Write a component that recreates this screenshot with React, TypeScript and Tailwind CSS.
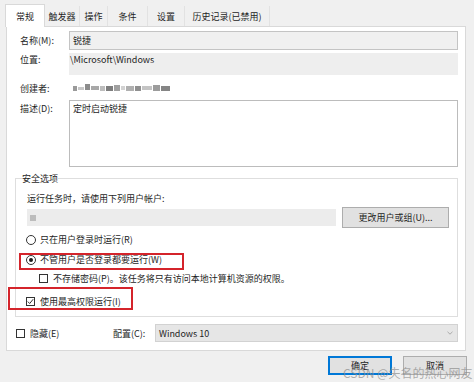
import React from "react"

function Radio({ checked }: { checked?: boolean }) {
  return (
    <span className="w-[10px] h-[10px] rounded-full border border-[#333] bg-white flex items-center justify-center shrink-0">
      {checked && <span className="w-[4px] h-[4px] rounded-full bg-[#1a1a1a]" />}
    </span>
  )
}

function Checkbox({ checked }: { checked?: boolean }) {
  return (
    <span className="w-[9px] h-[9px] border border-[#333] bg-white flex items-center justify-center shrink-0">
      {checked && (
        <svg width="7" height="7" viewBox="0 0 7 7">
          <path d="M0.8 3.6 L2.7 5.5 L6.2 1.2" fill="none" stroke="#1a1a1a" strokeWidth="0.9" />
        </svg>
      )}
    </span>
  )
}

const tabs = [
  { name: "触发器", w: "w-[35px]" },
  { name: "操作", w: "w-[28px]" },
  { name: "条件", w: "w-[40px]" },
  { name: "设置", w: "w-[37px]" },
  { name: "历史记录(已禁用)", w: "w-[85px]" },
]

export default function App() {
  return (
    <div className="relative w-[474px] h-[382px] overflow-hidden bg-[#f0f0f0] text-[9px] leading-[13px] text-[#1e1e1e] font-['Noto_Sans_CJK_SC',sans-serif]">
      {/* Tabs */}
      <div className="flex items-end h-[26px] pl-[5px]">
        <div className="relative z-10 -mb-px w-[40px] h-[23px] bg-white border border-b-0 border-[#d9d9d9] flex items-center justify-center">
          常规
        </div>
        {tabs.map((t) => (
          <div
            key={t.name}
            className={`${t.w} h-[20px] border-r border-[#e2e2e2] flex items-center justify-center`}
          >
            {t.name}
          </div>
        ))}
      </div>

      {/* Panel */}
      <div className="ml-[6px] w-[460px] bg-white border border-[#d9d9d9] pt-[4px] pb-[8px] pl-[8px] pr-[7px]">
        <div className="flex items-center h-[19px]">
          <div className="w-[54px] pl-[5px]">名称(M):</div>
          <div className="flex-1 h-[19px] bg-[#f0f0f0] border border-[#c4c4c4] px-[3px] flex items-center">锐捷</div>
        </div>

        <div className="mt-[3px] flex items-start">
          <div className="w-[54px] pl-[5px]">位置:</div>
          <div className="flex-1 h-[22px] bg-[#eeeeee] pl-[1px]">\Microsoft\Windows</div>
        </div>

        <div className="mt-[3px] h-[20px] flex items-center">
          <div className="w-[54px] pl-[5px]">创建者:</div>
          <div className="pl-[4px] flex items-center gap-[1px] blur-[0.6px]">
            <span className="w-[4px] h-[5px] bg-[#9a9a9a]" />
            <span className="w-[6px] h-[3px] bg-[#c8c8c8]" />
            <span className="w-[5px] h-[6px] bg-[#8c8c8c] -mt-[3px]" />
            <span className="w-[8px] h-[4px] bg-[#a8a8a8]" />
            <span className="w-[5px] h-[5px] bg-[#bdbdbd]" />
            <span className="w-[7px] h-[5px] bg-[#7e7e7e]" />
            <span className="w-[6px] h-[6px] bg-[#a0a0a0]" />
            <span className="w-[4px] h-[4px] bg-[#d2d2d2]" />
            <span className="w-[8px] h-[5px] bg-[#b0b0b0]" />
            <span className="w-[6px] h-[5px] bg-[#909090]" />
            <span className="w-[10px] h-[4px] bg-[#c4c4c4]" />
            <span className="w-[7px] h-[6px] bg-[#9c9c9c]" />
            <span className="w-[9px] h-[5px] bg-[#858585]" />
          </div>
        </div>

        <div className="mt-[2px] flex items-start">
          <div className="w-[54px] pl-[5px] pt-[2px]">描述(D):</div>
          <div className="flex-1 h-[67px] border border-[#bcbcbc] px-[3px] pt-[1px]">定时启动锐捷</div>
        </div>

        {/* Security options */}
        <fieldset className="mt-[5px] border border-[#dedede] p-0">
          <legend className="ml-[6px] px-0">安全选项</legend>
          <div className="pl-[11px] pr-[8px] pb-[8px]">
            <div className="mt-[7px]">运行任务时，请使用下列用户帐户:</div>

            <div className="mt-[2px] flex items-center gap-[6px] h-[21px]">
              <div className="flex-1 h-[17px] bg-[#ececec] flex items-center pl-[3px]">
                <span className="w-[6px] h-[6px] bg-[#bcbcbc] blur-[0.5px]" />
              </div>
              <div className="w-[107px] h-[21px] bg-[#e1e1e1] border border-[#adadad] flex items-center justify-center">
                更改用户或组(U)...
              </div>
            </div>

            <div className="mt-[5px] -ml-px flex items-center gap-[4px]">
              <Radio />
              <span>只在用户登录时运行(R)</span>
            </div>

            <div className="relative mt-[7px] -ml-px flex items-center gap-[4px]">
              <Radio checked />
              <span>不管用户是否登录都要运行(W)</span>
              <span className="absolute left-[-7px] top-0 w-[165px] h-[17px] border-2 border-[#d4242b]" />
            </div>

            <div className="mt-[6px] pl-[12px] flex items-center gap-[5px]">
              <Checkbox />
              <span>不存储密码(P)。该任务将只有访问本地计算机资源的权限。</span>
            </div>

            <div className="relative mt-[10px] -ml-px flex items-center gap-[5px]">
              <Checkbox checked />
              <span>使用最高权限运行(I)</span>
              <span className="absolute left-[-18px] top-[-8px] w-[125px] h-[23px] border-2 border-[#d4242b]" />
            </div>
          </div>
        </fieldset>

        <div className="mt-[7px] h-[18px] flex items-center">
          <div className="w-[98px] pl-px flex items-center gap-[5px]">
            <Checkbox />
            <span>隐藏(E)</span>
          </div>
          <div className="w-[42px]">配置(C):</div>
          <div className="flex-1 h-[18px] bg-[#e6e6e6] border border-[#d2d2d2] flex items-center justify-between pl-[3px] pr-[4px]">
            <span>Windows 10</span>
            <svg width="6" height="4" viewBox="0 0 6 4">
              <path d="M0.5 0.8 L3 3.2 L5.5 0.8" fill="none" stroke="#9a9a9a" strokeWidth="0.8" />
            </svg>
          </div>
        </div>
      </div>

      {/* Dialog buttons */}
      <div className="mt-[5px] flex justify-end gap-[11px] pr-[7px]">
        <div className="w-[64px] h-[19px] bg-[#e1e1e1] border-2 border-[#0078d7] flex items-center justify-center">确定</div>
        <div className="w-[64px] h-[19px] bg-[#e1e1e1] border border-[#adadad] flex items-center justify-center">取消</div>
      </div>

      {/* Watermark */}
      <div className="absolute left-[343px] top-[365px] text-[12px] leading-[15px] text-[#8c8c8c]/70 whitespace-nowrap">
        CSDN @失名的热心网友
      </div>
    </div>
  )
}
